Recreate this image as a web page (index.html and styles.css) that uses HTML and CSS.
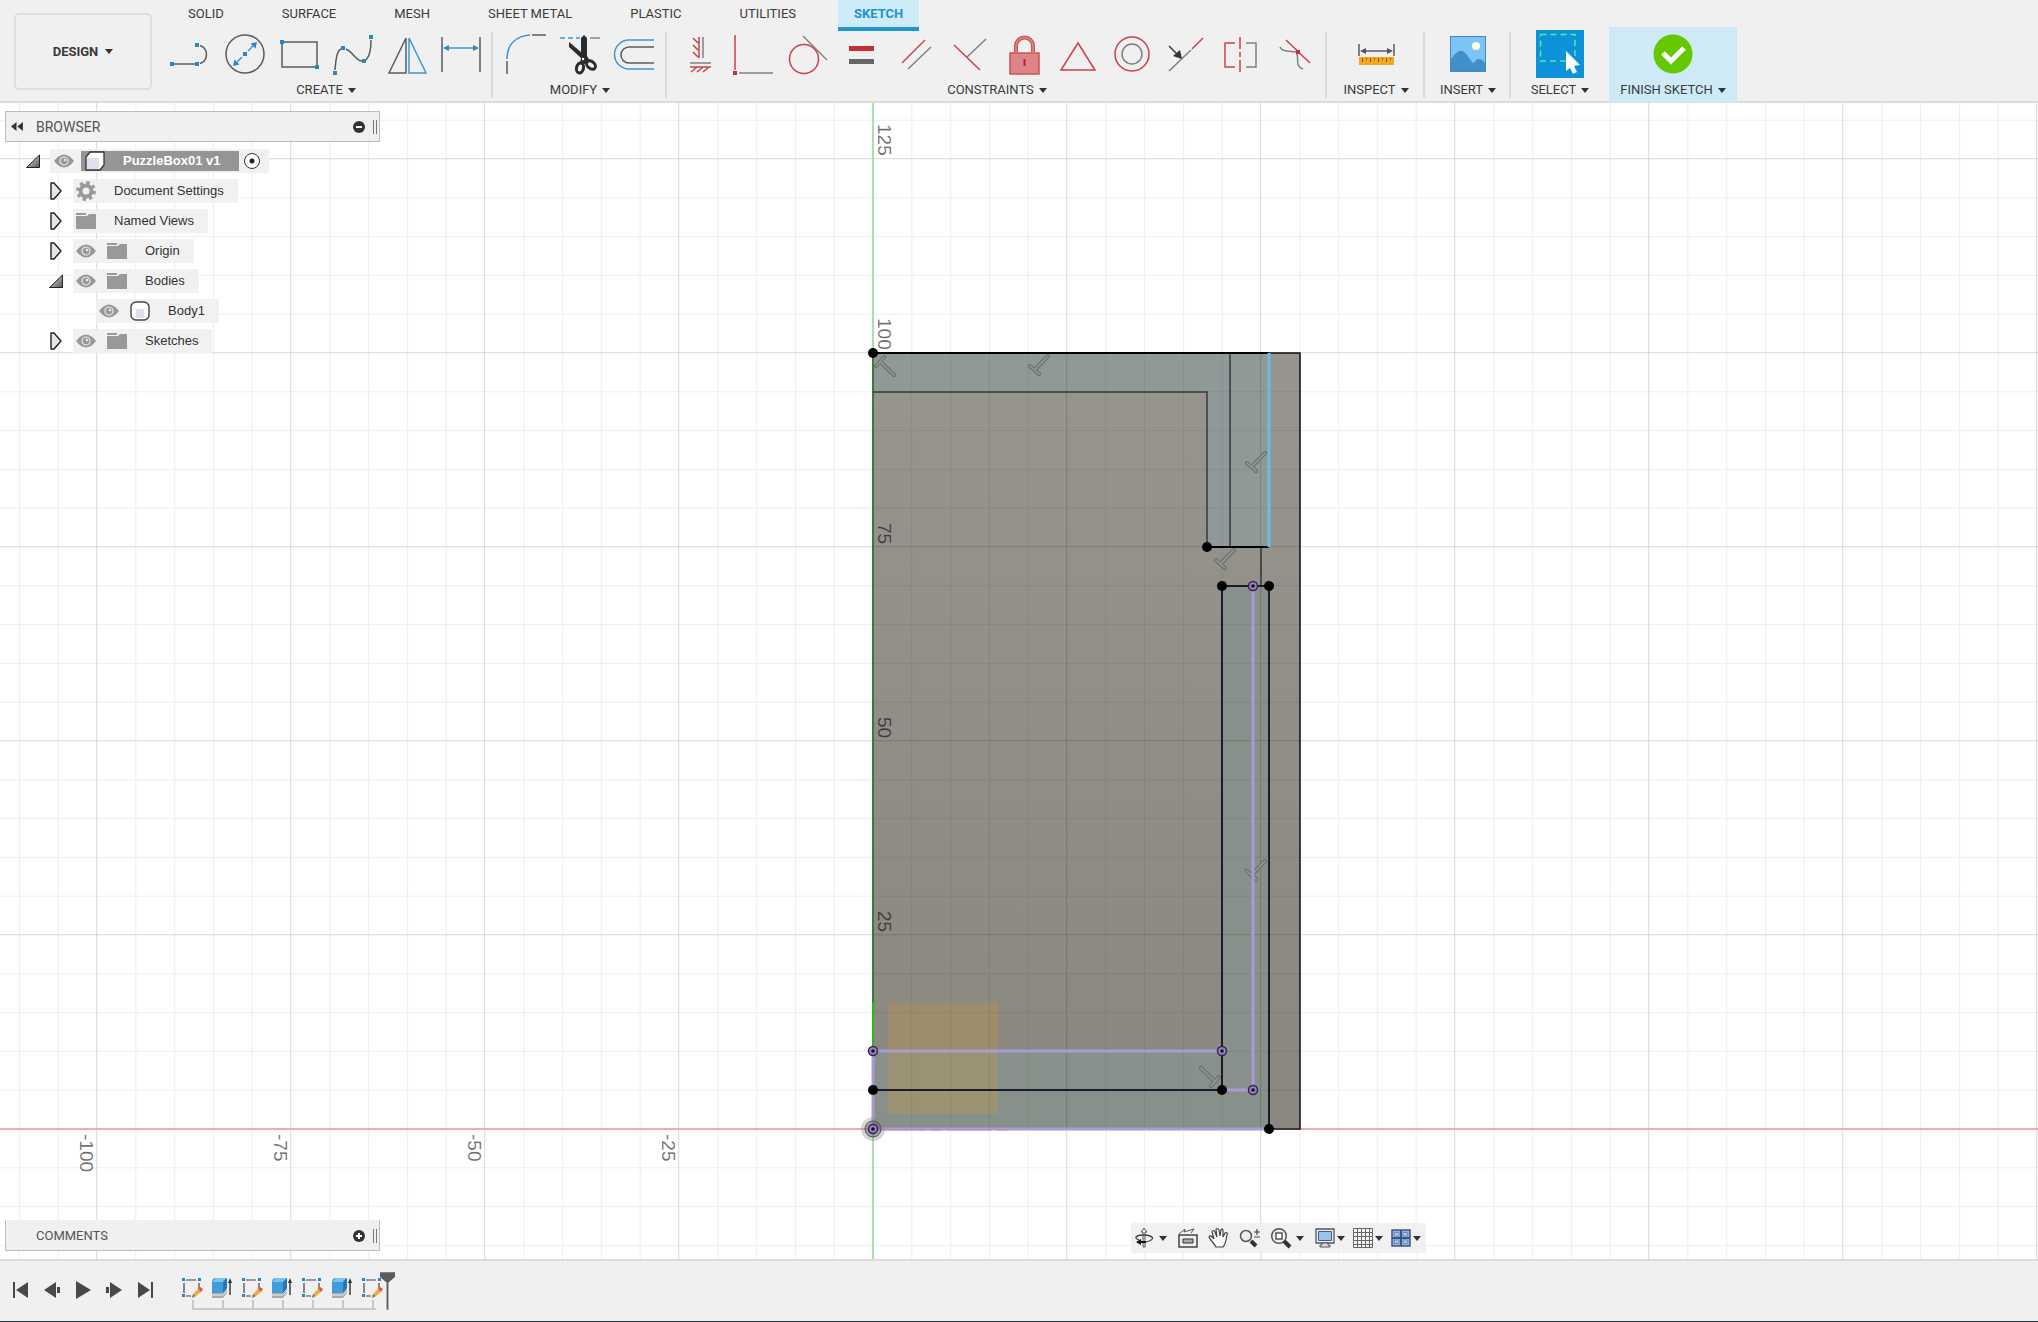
FILE: index.html
```html
<!DOCTYPE html>
<html lang="en">
<head>
<meta charset="utf-8">
<title>PuzzleBox01 v1</title>
<link rel="stylesheet" href="styles.css">
</head>
<body>
<svg class="defs" aria-hidden="true">
  <defs>
    <linearGradient id="shade" x1="0" y1="0" x2="1" y2="1"><stop offset="0" stop-color="#e8e8e8"/><stop offset="1" stop-color="#555"/></linearGradient>
    <linearGradient id="body-fill" x1="0" y1="0" x2="0" y2="1"><stop offset="0" stop-color="#98948e"/><stop offset="1" stop-color="#8a8680"/></linearGradient>
    <symbol id="eye" viewBox="0 0 20 20"><path d="M0 10Q10-3 20 10Q10 23 0 10Z" fill="#989898"/><circle cx="10" cy="10" r="4" fill="#989898" stroke="#e8e8e8" stroke-width="1.200"/><circle cx="11" cy="9" r="1.300" fill="#e8e8e8"/></symbol>
    <symbol id="folder" viewBox="0 0 20 20"><path d="M0 2H10V4H0ZM0 5H11L13 3H20V18H0Z" fill="#999"/></symbol>
    <symbol id="closed" viewBox="0 0 14 18"><path d="M2 1H5L12 9L5 17H2Z" fill="#e6e6e6" stroke="#222" stroke-width="1.400" stroke-linejoin="round"/></symbol>
    <symbol id="open" viewBox="0 0 14 18"><path d="M13.500 3V15.500H.5Z" fill="url(#shade)" stroke="#222"/></symbol>
    <symbol id="sketch" viewBox="0 0 22 22"><g fill="none" stroke="#444" stroke-width="1.200"><path d="M5 3H15M3 6V16M18 6V12M5 19H10"/></g><path d="M1 1H4V4H1ZM17 1H20V4H17ZM1 17H4V20H1Z" fill="#2a86c4"/><path d="M12 17L17 12L20 15L15 19Z" fill="#f6ad35"/><path d="M17 12L19 10L22 12L20 15Z" fill="#e65345"/><path d="M12 17L15 19L11 21Z" fill="#776"/></symbol>
    <symbol id="extrude" viewBox="0 0 22 22"><path d="M1 16H12L16 12V16L12 21H1Z" fill="#aaa"/><path d="M1 18H12L16 14" fill="none" stroke="#eee"/><path d="M1 5Q1 1 5 1H16V11L12 16H1Z" fill="#3f9ddd"/><path d="M1 5L5 1H16L12 5Z" fill="#7cc2f0"/><path d="M12 5L16 1V11L12 16Z" fill="#2478b5"/><path d="M19 18V4" stroke="#333" stroke-width="1.400"/><path d="M19 1L21 6H17Z" fill="#333"/></symbol>
    <symbol id="perp" viewBox="0 0 24 24"><path d="M3 14L12 22M7.500 18L21 4" fill="none" stroke="#6a6d6a" stroke-width="4" stroke-linecap="round"/><path d="M3 14L12 22M7.500 18L21 4" fill="none" stroke="#8f938f" stroke-width="2" stroke-linecap="round"/></symbol>
  </defs>
</svg>

<header class="toolbar">
  <div class="mode"><button class="mode-button">DESIGN<i class="caret"></i></button></div>
  <div class="ribbon">
    <nav class="tabs">
      <button>SOLID</button><button>SURFACE</button><button>MESH</button><button>SHEET METAL</button><button>PLASTIC</button><button>UTILITIES</button><button class="active">SKETCH</button>
    </nav>
    <div class="groups">
      <section class="group create">
        <div class="icons">
          <button aria-label="Line"><svg viewBox="0 0 40 40"><g class="k"><path d="M1 30H26M29 29.500A9.500 9.500 0 0 0 29 11.500"/></g><path class="b" d="M-1 28H3V32H-1ZM24 28H28V32H24ZM24 9H28V13H24Z"/></svg></button>
          <button aria-label="Circle"><svg viewBox="0 0 40 40"><circle class="k" cx="20" cy="20" r="19"/><path class="bl" d="M12 28L17 23M23 17L28 12"/><path class="b" d="M8 32L9.500 25.500L14.500 30.500ZM32 8L25.500 9.500L30.500 14.500ZM18 18H22V22H18Z"/></svg></button>
          <button aria-label="Rectangle"><svg viewBox="0 0 40 40"><path class="k" d="M3 8H38V33H3Z"/><path class="b" d="M1 6H5V10H1ZM36 31H40V35H36Z"/></svg></button>
          <button aria-label="Spline"><svg viewBox="0 0 40 40"><path class="k" d="M2 36C3 24 4 17 8 15M13 15C20 18 23 27 29 27M33 26C37 22 38 13 38 6"/><path class="b" d="M0 37H4V41H0ZM8 12H12V16H8ZM29 25H33V29H29ZM36 1H40V5H36Z"/></svg></button>
          <button aria-label="Mirror"><svg viewBox="0 0 40 40"><path class="k" d="M19 4V39H2Z"/><path class="bl" d="M22 4V39H39Z"/></svg></button>
          <button aria-label="Dimension"><svg viewBox="0 0 40 40"><path class="k" d="M1 3V38M39 3V38"/><path class="bl" d="M4 14H36"/><path class="b" d="M2 14L8 11V17ZM38 14L32 11V17Z"/></svg></button>
        </div>
        <button class="caption">CREATE<i class="caret"></i></button>
      </section>
      <section class="group">
        <div class="icons">
          <button aria-label="Fillet"><svg viewBox="0 0 40 40"><path class="k" d="M26 1H40M1 27V40"/><path class="bl" d="M1 25C1 10 10 2 24 1"/></svg></button>
          <button aria-label="Trim"><svg viewBox="-3 0 40 40"><path class="bl" stroke-dasharray="5 3" d="M-3 4H17"/><path d="M27 4H37" stroke="#888" stroke-width="1.500"/><path fill="#2c2c2c" d="M18 4L21 1L24 4V22L27 27L22 30L17 29L18 24L6 13V8L18 18Z"/><g fill="none" stroke="#2c2c2c" stroke-width="3"><ellipse cx="17" cy="34" rx="3.500" ry="5" transform="rotate(14 17 34)"/><ellipse cx="28" cy="31" rx="3.500" ry="5" transform="rotate(-50 28 31)"/></g><circle cx="20" cy="25" r="1.200" fill="#fff"/></svg></button>
          <button aria-label="Offset"><svg viewBox="0 0 40 40"><path class="bl" stroke-width="2" d="M40 6H15A14 14 0 0 0 15 35H40"/><path class="k" d="M40 13H15A8 8 0 0 0 15 29H40"/></svg></button>
        </div>
        <button class="caption">MODIFY<i class="caret"></i></button>
      </section>
      <section class="group">
        <div class="icons">
          <button aria-label="Horizontal/Vertical"><svg viewBox="0 0 40 40"><path class="r" d="M19 3V24M18 9L13 4M18 16L13 11M18 23L13 18M10 33H31M17 33L11 38M23 33L17 38M29 33L23 38"/><path class="g" d="M23 3V24M10 29H31"/></svg></button>
          <button aria-label="Coincident"><svg viewBox="0 0 40 40"><path class="r" d="M1 1V36"/><path class="rf" d="M-1 37H3V41H-1Z"/><path class="g" d="M5 39H39"/></svg></button>
          <button aria-label="Tangent"><svg viewBox="0 0 40 40"><circle class="r" cx="16" cy="25" r="14.500"/><path class="g" d="M15 2L39 26"/></svg></button>
          <button aria-label="Equal"><svg viewBox="0 0 40 40"><path class="rf" d="M7 12H32V17H7Z"/><path fill="#666" d="M7 25H32V30H7Z"/></svg></button>
          <button aria-label="Parallel"><svg viewBox="0 0 40 40"><path class="r" d="M6 29L29 6"/><path class="g" d="M12 35L35 13"/></svg></button>
          <button aria-label="Perpendicular"><svg viewBox="0 0 40 40"><path class="r" d="M4 11L30 36"/><path class="g" d="M17 23L36 5"/></svg></button>
          <button aria-label="Fix"><svg viewBox="0 0 40 40"><path d="M12 18V12A8.500 8.500 0 0 1 29 12V18" fill="none" stroke="#cb5257" stroke-width="4"/><path d="M12 18V12A8.500 8.500 0 0 1 29 12V18" fill="none" stroke="#e08a8c" stroke-width="1.500"/><path d="M6 19H35V40H6Z" fill="#df8588" stroke="#cb5257" stroke-width="1.500"/><path d="M20.500 25V32" stroke="#b5262d" stroke-width="2"/></svg></button>
          <button aria-label="Midpoint"><svg viewBox="0 0 40 40"><path class="r" stroke-width="2" d="M20 9L37 36H3Z"/></svg></button>
          <button aria-label="Concentric"><svg viewBox="0 0 40 40"><circle class="r" cx="20" cy="20" r="17"/><circle class="g" cx="20" cy="20" r="10"/></svg></button>
          <button aria-label="Collinear"><svg viewBox="0 0 40 40"><path class="g" d="M3 37L25 16"/><path class="r" d="M26 15L37 4"/><path d="M3 12L11 20" stroke="#333" stroke-width="1.500"/><path d="M16 25L7 22L14 16Z" fill="#333"/></svg></button>
          <button aria-label="Symmetry"><svg viewBox="0 0 40 40"><path class="r" d="M15 9H5V33H15"/><path class="r" stroke-dasharray="12 3 5 3" d="M20 3V39"/><path class="g" d="M26 9H36V33H26"/></svg></button>
          <button aria-label="Curvature"><svg viewBox="0 0 40 40"><path class="g" d="M6 13C8 18 15 17 22 18C26 23 20 32 29 35"/><path class="r" d="M12 6L36 29"/><path class="rf" d="M22 16H26V20H22Z"/></svg></button>
        </div>
        <button class="caption">CONSTRAINTS<i class="caret"></i></button>
      </section>
      <section class="group wide">
        <div class="icons">
          <button aria-label="Measure"><svg viewBox="0 0 40 40"><path class="k" d="M3 10V22M38 10V22M6 17H35"/><path d="M4 17L10 14V20ZM37 17L31 14V20Z" fill="#555"/><path d="M3 23H38V31H3Z" fill="#f5a81c"/><path stroke="#8a5a00" d="M6.500 24V28M10.500 24V26M14.500 24V28M18.500 24V26M22.500 24V28M26.500 24V26M30.500 24V28M34.500 24V26"/></svg></button>
        </div>
        <button class="caption">INSPECT<i class="caret"></i></button>
      </section>
      <section class="group">
        <div class="icons">
          <button aria-label="Insert image"><svg viewBox="0 0 40 40"><path d="M2 2H38V38H2Z" fill="#7cc3f8"/><path d="M2 27C6 21 11 14 16 18C21 22 23 29 26 29C28 24 33 23 38 30V38H2Z" fill="#3f8fc9"/><path d="M2.500 2.500H37.500V37.500H2.500Z" fill="none" stroke="#4388bd"/><circle cx="28" cy="12" r="4" fill="#fdfde0"/></svg></button>
        </div>
        <button class="caption">INSERT<i class="caret"></i></button>
      </section>
      <section class="group wide last">
        <div class="icons">
          <button class="select" aria-label="Select"><svg viewBox="0 0 48 48"><path d="M0 0H48V48H0Z" fill="#0b92d8"/><path d="M4.500 4.500H39V31H4.500Z" fill="none" stroke="#5fe3a3" stroke-width="1.500" stroke-dasharray="6 4"/><path d="M30 21L44 35L38 36L41 42L37 44L34 38L30 41Z" fill="#fff"/></svg></button>
        </div>
        <button class="caption">SELECT<i class="caret"></i></button>
      </section>
      <section class="group finish">
        <div class="icons">
          <button aria-label="Finish sketch"><svg viewBox="0 0 40 40"><circle cx="20" cy="20" r="19.500" fill="#64c800"/><path d="M10 19L18 27L31 14" fill="none" stroke="#fff" stroke-width="5"/></svg></button>
        </div>
        <button class="caption">FINISH SKETCH<i class="caret"></i></button>
      </section>
    </div>
  </div>
</header>

<main class="workspace">
  <svg class="canvas" aria-label="Sketch canvas">
    <defs>
      <pattern id="minor" width="38.800" height="38.800" patternUnits="userSpaceOnUse" x="872.500" y="1025.500"><path d="M0 .5H38.800M.5 0V38.800" stroke="#000" stroke-opacity=".065"/></pattern>
      <pattern id="major" width="194" height="194" patternUnits="userSpaceOnUse" x="872" y="1025"><path d="M0 .5H194M.5 0V194" stroke="#000" stroke-opacity=".09"/></pattern>
    </defs>
    <g transform="translate(873 1026)">
      <rect y="-776" width="427" height="776" fill="url(#body-fill)"/>
      <path d="M0-776H396V-582H334V-737H0Z" fill="#8f9a98"/>
      <path d="M349-543H396V0H0V-78H349Z" fill="#87908a"/>
      <rect x="15" y="-126" width="110" height="111" fill="#c9983c" fill-opacity=".3"/>
    </g>
    <rect width="100%" height="100%" fill="url(#minor)"/>
    <rect width="100%" height="100%" fill="url(#major)"/>
    <path class="x-axis" d="M0 1026H6000"/>
    <path class="y-axis" d="M873 0V4000"/>
    <g class="ruler">
      <text transform="translate(878 21) rotate(90)">125</text>
      <text transform="translate(878 215) rotate(90)">100</text>
      <text transform="translate(878 420) rotate(90)">75</text>
      <text transform="translate(878 614) rotate(90)">50</text>
      <text transform="translate(878 808) rotate(90)">25</text>
      <text transform="translate(80 1031) rotate(90)">-100</text>
      <text transform="translate(274 1031) rotate(90)">-75</text>
      <text transform="translate(468 1031) rotate(90)">-50</text>
      <text transform="translate(662 1031) rotate(90)">-25</text>
    </g>
    <g transform="translate(873 1026)" fill="none">
      <path d="M0-776V-78" stroke="#3c7a3c" stroke-width="2"/>
      <path d="M0-126V-78" stroke="#2db51c" stroke-width="2"/>
      <path d="M396-776H427V0H396" stroke="#111" stroke-width="1.500"/>
      <path d="M0-737H334V-582" stroke="#333a3a" stroke-width="1.500"/>
      <path d="M357-776V-582M388-582V-543" stroke="#1c2424" stroke-width="1.200"/>
      <path d="M0-776H396M334-582H396" stroke="#000" stroke-width="2"/>
      <path d="M396-776V-582" stroke="#6bbce2" stroke-width="3"/>
      <use href="#perp" x="154" y="-777" width="24" height="24"/>
      <use href="#perp" x="371" y="-680" width="24" height="24"/>
      <use href="#perp" x="340" y="-583" width="24" height="24"/>
      <use href="#perp" x="371" y="-272" width="24" height="24"/>
      <use href="#perp" width="24" height="24" transform="translate(25 -775) rotate(90)"/>
      <use href="#perp" width="24" height="24" transform="translate(324 -40) rotate(-90)"/>
      <path d="M0-39V0H396M0-78H349M0-78V-39M349-39H380V-543" stroke="#a79bd2" stroke-width="3"/>
      <path d="M8 1H140" stroke="#c987b8" stroke-width="1" stroke-dasharray="45 4 12 5"/>
      <path d="M0-39H349V-543H396V0" stroke="#1c1b2c" stroke-width="2"/>
      <circle r="12" fill="#888" fill-opacity=".35"/>
      <circle r="8" fill="#555" fill-opacity=".4" stroke="#555"/>
      <g fill="#000"><circle cy="-776" r="5"/><circle cx="334" cy="-582" r="5"/><circle cx="349" cy="-543" r="5"/><circle cx="396" cy="-543" r="5"/><circle cy="-39" r="5"/><circle cx="349" cy="-39" r="5"/><circle cx="396" r="5"/></g>
      <g fill="#9a82c0" stroke="#33234f" stroke-width="1.500"><circle r="4.500"/><circle cy="-78" r="4.500"/><circle cx="349" cy="-78" r="4.500"/><circle cx="380" cy="-39" r="4.500"/><circle cx="380" cy="-543" r="4.500"/></g>
      <g fill="#15102a"><circle r="1.800"/><circle cy="-78" r="1.800"/><circle cx="349" cy="-78" r="1.800"/><circle cx="380" cy="-39" r="1.800"/><circle cx="380" cy="-543" r="1.800"/></g>
    </g>
  </svg>

  <div class="side">
    <section class="browser">
      <div class="panel-head">
        <button class="collapse" aria-label="Collapse"><svg viewBox="0 0 14 12"><path d="M7 1V11L1 6ZM14 1V11L8 6Z" fill="#333"/></svg></button>
        <span>BROWSER</span>
        <button class="round" aria-label="Minimize"><svg viewBox="0 0 12 12"><circle cx="6" cy="6" r="6" fill="#333"/><path d="M3 6H9" stroke="#fff" stroke-width="2"/></svg></button>
        <i class="grip"></i>
      </div>
      <ul class="tree">
        <li><button class="twist" aria-label="Collapse"><svg><use href="#open"/></svg></button><div class="node root"><svg><use href="#eye"/></svg><span class="picked"><svg viewBox="0 0 20 20"><path d="M1 6L5 1H19V14L15 19H1Z" fill="#fff" stroke="#333" stroke-width="1.300" stroke-linejoin="round"/><path d="M2 7H14V18H2Z" fill="#dde2ea"/></svg>PuzzleBox01 v1</span><input type="radio" aria-label="Active component" checked></div></li>
        <li class="l1"><button class="twist" aria-label="Expand"><svg><use href="#closed"/></svg></button><div class="node"><svg viewBox="0 0 20 20"><circle cx="10" cy="10" r="5.500" fill="none" stroke="#999" stroke-width="4"/><circle cx="10" cy="10" r="8.500" fill="none" stroke="#999" stroke-width="3" stroke-dasharray="3.340 3.340"/></svg><span>Document Settings</span></div></li>
        <li class="l1"><button class="twist" aria-label="Expand"><svg><use href="#closed"/></svg></button><div class="node"><svg><use href="#folder"/></svg><span>Named Views</span></div></li>
        <li class="l1"><button class="twist" aria-label="Expand"><svg><use href="#closed"/></svg></button><div class="node"><svg><use href="#eye"/></svg><svg><use href="#folder"/></svg><span>Origin</span></div></li>
        <li class="l1"><button class="twist" aria-label="Collapse"><svg><use href="#open"/></svg></button><div class="node"><svg><use href="#eye"/></svg><svg><use href="#folder"/></svg><span>Bodies</span></div></li>
        <li class="l2"><div class="node"><svg><use href="#eye"/></svg><svg viewBox="0 0 20 20"><rect x="1" y="1" width="18" height="18" rx="5" fill="#fff" stroke="#444" stroke-width="1.400"/><path d="M6 8H14V17H6Z" fill="#dde2ea"/></svg><span>Body1</span></div></li>
        <li class="l1"><button class="twist" aria-label="Expand"><svg><use href="#closed"/></svg></button><div class="node"><svg><use href="#eye"/></svg><svg><use href="#folder"/></svg><span>Sketches</span></div></li>
      </ul>
    </section>
    <section class="panel-head comments">
      <span>COMMENTS</span>
      <button class="round" aria-label="Expand comments"><svg viewBox="0 0 12 12"><circle cx="6" cy="6" r="6" fill="#333"/><path d="M3 6H9M6 3V9" stroke="#fff" stroke-width="2"/></svg></button>
      <i class="grip"></i>
    </section>
  </div>

  <nav class="viewbar">
    <button aria-label="Orbit"><svg viewBox="0 0 20 20"><path d="M10 0L13 4H11V19H9V4H7Z" fill="#eee" stroke="#555"/><path d="M5 12C-2 9 4 7 10 7S23 10 15 13L12 14" fill="none" stroke="#444" stroke-width="1.300"/><path d="M2 14L7 11V13H12V15H7V17Z" fill="#111"/></svg><i class="caret"></i></button>
    <button aria-label="Look at"><svg viewBox="0 0 20 20"><path d="M1 7H19V19H1Z" fill="#eee" stroke="#444" stroke-width="1.500"/><path d="M5 11H15V15H5Z" fill="#aaa" stroke="#333"/><path d="M1 6L7 1L6 4L16 1L13 5" fill="none" stroke="#555"/></svg></button>
    <button aria-label="Pan"><svg viewBox="0 0 20 20"><path d="M7 19C5 15 1 12 0 9C1 7 3 8 5 11L3 4C3 2 5 2 6 4L8 9L7 2C7 0 9 0 10 2L11 8L12 2C13 0 14 1 14 3L14 9L16 5C18 4 19 5 18 7C17 11 17 16 14 19Z" fill="#f8f8f8" stroke="#444" stroke-width="1.200"/></svg></button>
    <button aria-label="Zoom"><svg viewBox="0 0 20 20"><circle cx="6" cy="8" r="5.500" fill="#e5efef" stroke="#555" stroke-width="1.500"/><path d="M11 13L16 18" stroke="#333" stroke-width="4"/><path d="M14 4H20M17 1V7M14 9H20" stroke="#444" stroke-width="1.200"/></svg></button>
    <button aria-label="Fit"><svg viewBox="0 0 20 20"><circle cx="8" cy="8" r="7.300" fill="#eee" stroke="#555" stroke-width="1.500"/><path d="M5 5H11V11H5Z" fill="#fff" stroke="#555" stroke-width="1.500"/><path d="M13 13L19 19" stroke="#333" stroke-width="4"/></svg><i class="caret"></i></button>
    <button aria-label="Display settings"><svg viewBox="0 0 20 20"><path d="M1 1H19V15H1Z" fill="#eee" stroke="#555" stroke-width="1.300"/><path d="M3.500 3.500H16.500V12.500H3.500Z" fill="#9cc3ec" stroke="#3a5f90"/><path d="M7 15H13V17H15V19H5V17H7Z" fill="#ddd" stroke="#555"/></svg><i class="caret"></i></button>
    <button aria-label="Grid and snaps"><svg viewBox="0 0 20 20"><path d="M.5.5H19.500V19.500H.5ZM4.500 0V20M8.500 0V20M12.500 0V20M16.500 0V20M0 4.500H20M0 8.500H20M0 12.500H20M0 16.500H20" fill="#f5f5f5" stroke="#666"/></svg><i class="caret"></i></button>
    <button aria-label="Viewports"><svg viewBox="0 0 20 20"><path d="M1 2H19V18H1Z" fill="#8fb2dd" stroke="#3c5680" stroke-width="1.500"/><path d="M10 2V18M1 10H19" stroke="#3c5680" stroke-width="2"/><path d="M3.500 4.500H8V8H3.500ZM12 4.500H16.500V8H12ZM3.500 12H8V15.500H3.500ZM12 12H16.500V15.500H12Z" fill="#a9c6ea" stroke="#6b8fbf"/></svg><i class="caret"></i></button>
  </nav>
</main>

<footer class="timeline">
  <div class="playback">
    <button aria-label="To start"><svg viewBox="0 0 18 18"><path d="M1 1H3V17H1ZM16 1V17L4 9Z"/></svg></button>
    <button aria-label="Step back"><svg viewBox="0 0 18 18"><path d="M13 1V17L1 9ZM14 6H17V12H14Z"/></svg></button>
    <button aria-label="Play"><svg viewBox="0 0 18 18"><path d="M2 0V18L17 9Z"/></svg></button>
    <button aria-label="Step forward"><svg viewBox="0 0 18 18"><path d="M5 1V17L17 9ZM1 6H4V12H1Z"/></svg></button>
    <button aria-label="To end"><svg viewBox="0 0 18 18"><path d="M15 1H17V17H15ZM2 1V17L14 9Z"/></svg></button>
  </div>
  <div class="features">
    <button aria-label="Sketch1"><svg><use href="#sketch"/></svg></button>
    <button aria-label="Extrude1"><svg><use href="#extrude"/></svg></button>
    <button aria-label="Sketch2"><svg><use href="#sketch"/></svg></button>
    <button aria-label="Extrude2"><svg><use href="#extrude"/></svg></button>
    <button aria-label="Sketch3"><svg><use href="#sketch"/></svg></button>
    <button aria-label="Extrude3"><svg><use href="#extrude"/></svg></button>
    <button aria-label="Sketch4"><svg><use href="#sketch"/></svg></button>
    <svg class="marker" viewBox="0 0 16 40"><path d="M0 0H16V5L9 11V40H7V11L0 5Z" fill="#5c5c5c"/></svg>
  </div>
</footer>
</body>
</html>
```
FILE: styles.css
```css
* { box-sizing: border-box; }

body {
  margin: 0;
  min-height: 100vh;
  display: flex;
  flex-direction: column;
  background: #fff;
  color: #3a3a3a;
  font: 13px/20px Roboto, "Liberation Sans", sans-serif;
  overflow: hidden;
}

button {
  margin: 0;
  padding: 0;
  border: 0;
  background: none;
  color: inherit;
  font: inherit;
}

svg { display: block; overflow: visible; }
.defs { position: absolute; width: 0; height: 0; }

.caret {
  display: inline-block;
  border: 4px solid transparent;
  border-top: 5px solid #333;
  border-bottom: 0;
}

/* toolbar */
.toolbar {
  display: flex;
  height: 103px;
  background: #f0f0f0;
  border-bottom: 2px solid #dcdcdc;
}
.mode { width: 158px; padding: 13px 6px 11px 14px; }
.mode-button {
  width: 100%;
  height: 100%;
  display: flex;
  align-items: center;
  justify-content: center;
  gap: 7px;
  border: 2px solid #dedede;
  border-radius: 5px;
  font-weight: 700;
}
.ribbon { flex: 1; display: flex; flex-direction: column; }
.tabs { display: flex; gap: 26px; padding-left: 14px; height: 31px; }
.tabs button { padding: 0 16px; height: 31px; border-bottom: 4px solid transparent; }
.tabs .active {
  background: #cdebf8;
  border-color: #1d94cb;
  color: #1d94cb;
  font-weight: 700;
}
.groups { flex: 1; display: flex; margin-top: -4px; }
.group {
  display: flex;
  flex-direction: column;
  align-items: center;
  padding: 3px 6px 0;
}
.group:not(.last):not(.finish) {
  padding-right: 4px;
  border-right: 2px solid #dadada;
  border-image: linear-gradient(transparent 6px, #dadada 6px, #dadada 70px, transparent 70px) 1;
}
.group.create:not(.last) { padding-right: 3px; }
.wide { min-width: 98px; }
.group:not(.wide) > .icons:has(> :only-child) { min-width: 74px; }
.icons { display: flex; justify-content: center; height: 48px; align-items: center; }
.icons button { width: 54px; display: flex; justify-content: center; }
.icons svg { width: 40px; height: 40px; }
.icons .select svg { width: 48px; height: 48px; }
.caption { display: flex; align-items: center; gap: 5px; height: 24px; white-space: nowrap; }
.finish { width: 128px; background: #cdeaf6; }

.k, .g, .r, .bl { fill: none; stroke-width: 1.5px; }
.k { stroke: #5c5c5c; }
.g { stroke: #808080; }
.r { stroke: #cc4148; }
.rf { fill: #c22f35; }
.bl { stroke: #3d97d8; }
.b { fill: #2a86c4; }

/* canvas */
.workspace { flex: 1; position: relative; }
.canvas { position: absolute; inset: 0; width: 100%; height: 100%; overflow: hidden; }
.x-axis { stroke: #f0aab0; stroke-width: 2px; }
.y-axis { stroke: #a6e2ac; stroke-width: 2px; }
.ruler { font: 19px "Liberation Sans", sans-serif; fill: #000; fill-opacity: .56; }

.side {
  position: absolute;
  inset: 8px auto 8px 5px;
  width: 375px;
  display: flex;
  flex-direction: column;
  justify-content: space-between;
}
.panel-head {
  display: flex;
  align-items: center;
  height: 31px;
  padding: 0 2px 0 4px;
  background: #f0f0f0;
  border: 1px solid #bdbdbd;
  color: #555;
  font-size: 14px;
}
.panel-head span { flex: 1; }
.panel-head.comments { padding-left: 30px; border-top-color: #f0f0f0; font-size: 13px; }
.collapse { width: 26px; }
.collapse svg { width: 13px; height: 11px; }
.round svg { width: 12px; height: 12px; }
.grip { width: 4px; height: 14px; margin-left: 8px; border: solid #777; border-width: 0 1px; }

.tree {
  list-style: none;
  margin: 4px 0 0;
  padding: 0;
  font: 13px/20px "Liberation Sans", Arial, sans-serif;
}
.tree li { display: flex; align-items: center; height: 30px; padding-left: 21px; }
.tree .l1 { padding-left: 44px; }
.tree .l2 { padding-left: 91px; }
.twist { width: 24px; }
.twist svg { width: 14px; height: 18px; }
.node { display: flex; align-items: center; height: 24px; padding: 0 14px 0 3px; background: #f1f1f1; color: #333; }
.node svg { width: 20px; height: 20px; margin-right: 11px; }
.node span { padding-left: 7px; white-space: nowrap; }
.root { padding: 0 9px 0 4px; }
.root > svg { margin-right: 7px; }
.node .picked {
  display: flex;
  align-items: center;
  height: 20px;
  padding: 0 18px 0 4px;
  background: #959595;
  color: #fff;
  font-weight: 700;
}
.picked svg { margin-right: 18px; }
.root input {
  appearance: none;
  width: 16px;
  height: 16px;
  margin: 0 0 0 5px;
  border: 1px solid #333;
  border-radius: 50%;
  background: radial-gradient(#222 2px, #fff 3px);
}

.viewbar {
  position: absolute;
  left: 55.5%;
  bottom: 6px;
  display: flex;
  align-items: center;
  gap: 11px;
  height: 30px;
  padding: 0 5px 0 3px;
  background: #f1f1f1;
}
.viewbar button { display: flex; align-items: center; gap: 5px; }
.viewbar button:nth-child(n+6) { gap: 2px; }
.viewbar button:nth-child(n+7) { margin-left: -3px; }
.viewbar svg { width: 20px; height: 20px; }

/* timeline */
.timeline {
  display: flex;
  gap: 24px;
  height: 63px;
  padding: 10px 12px 0;
  background: #f0f0f0;
  border-top: 2px solid #dcdcdc;
  border-bottom: 1px solid #26343f;
}
.playback { display: flex; align-items: flex-start; gap: 13px; padding-top: 10px; }
.playback svg { width: 18px; height: 18px; fill: #484848; }
.features { display: flex; align-items: flex-start; padding-top: 6px; position: relative; }
.features button { width: 30px; height: 33px; position: relative; padding-left: 3px; display: flex; }
.features button svg { width: 22px; height: 22px; }
.features button::after {
  content: "";
  position: absolute;
  left: 14px;
  bottom: 0;
  width: 30px;
  height: 8px;
  border: solid #c8c8c8;
  border-width: 0 0 2px 2px;
}
.features button:nth-child(7)::after { width: 2px; }
.marker { position: absolute; left: 202px; top: 0; width: 15px; height: 40px; }
```
